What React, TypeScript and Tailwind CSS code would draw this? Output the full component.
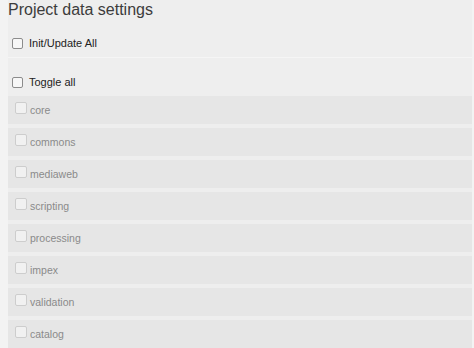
const modules = [
  'core',
  'commons',
  'mediaweb',
  'scripting',
  'processing',
  'impex',
  'validation',
  'catalog',
];

function Box({ disabled }: { disabled?: boolean }) {
  return disabled ? (
    <span className="block w-[12px] h-[12px] shrink-0 rounded-[2px] border border-[#cdcdcd] bg-[#f1f1f1]" />
  ) : (
    <span className="block w-[11px] h-[11px] shrink-0 rounded-[2px] border border-[#8c8c8c] bg-[#f7f7f7]" />
  );
}

export default function App() {
  return (
    <div
      className="w-[474px] h-[348px] overflow-hidden bg-[#f3f3f3] pl-2 pr-[2px]"
      style={{ fontFamily: '"Liberation Sans", Arial, sans-serif' }}
    >
      <div className="h-full bg-[#eeeeee]">
        <h1 className="h-[20px] text-[16px] leading-[20px] text-[#3c3c3c]">Project data settings</h1>

        <label className="mt-[14px] flex h-[18px] items-center gap-[6px] pl-[4px] text-[11px] leading-[18px] text-[#222]">
          <Box />
          Init/Update All
        </label>

        <div className="mt-[5px] h-px bg-[#f5f5f5]" />

        <label className="mt-[15px] flex h-[18px] items-center gap-[6px] pl-[4px] text-[11px] leading-[18px] text-[#222]">
          <Box />
          Toggle all
        </label>

        <ul className="mt-[5px] flex flex-col gap-[4px]">
          {modules.map((m) => (
            <li key={m} className="flex h-[28px] items-start gap-[3px] bg-[#e6e6e6] pl-[7px] pt-[6px]">
              <Box disabled />
              <span className="mt-[1px] text-[10.5px] leading-[14px] text-[#8a8a8a]">{m}</span>
            </li>
          ))}
        </ul>
      </div>
    </div>
  );
}
